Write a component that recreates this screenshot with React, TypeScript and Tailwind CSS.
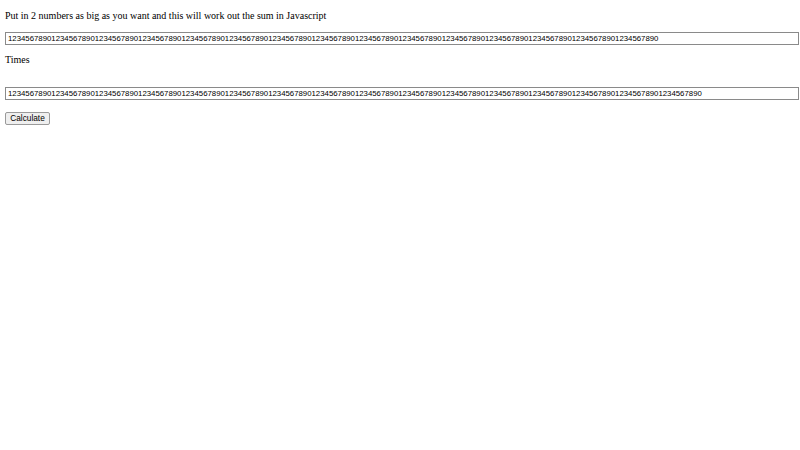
import React, { useState } from 'react';

const first = '1234567890'.repeat(15);
const second = '1234567890'.repeat(16);

const App: React.FC = () => {
  const [a, setA] = useState(first);
  const [b, setB] = useState(second);

  return (
    <div className="w-[800px] h-[450px] bg-white text-black pl-[5px] pr-[1px] pt-[10px] font-['Liberation_Serif',serif] text-[10px] leading-[11px]">
      <p>Put in 2 numbers as big as you want and this will work out the sum in Javascript</p>
      <input
        value={a}
        onChange={(e) => setA(e.target.value)}
        className="mt-[11px] block w-full h-[13px] border border-[#8a8a8a] px-[2px] font-['Liberation_Sans',sans-serif] text-[7.8px] leading-[11px] outline-none"
      />
      <p className="mt-[9px]">Times</p>
      <input
        value={b}
        onChange={(e) => setB(e.target.value)}
        className="mt-[22px] block w-full h-[13px] border border-[#8a8a8a] px-[2px] font-['Liberation_Sans',sans-serif] text-[7.8px] leading-[11px] outline-none"
      />
      <button className="mt-[12px] block h-[13px] w-[45px] border border-[#9a9a9a] rounded-[2px] bg-[#efefef] font-['Liberation_Sans',sans-serif] text-[8.3px] leading-[11px]">
        Calculate
      </button>
    </div>
  );
};

export default App;
